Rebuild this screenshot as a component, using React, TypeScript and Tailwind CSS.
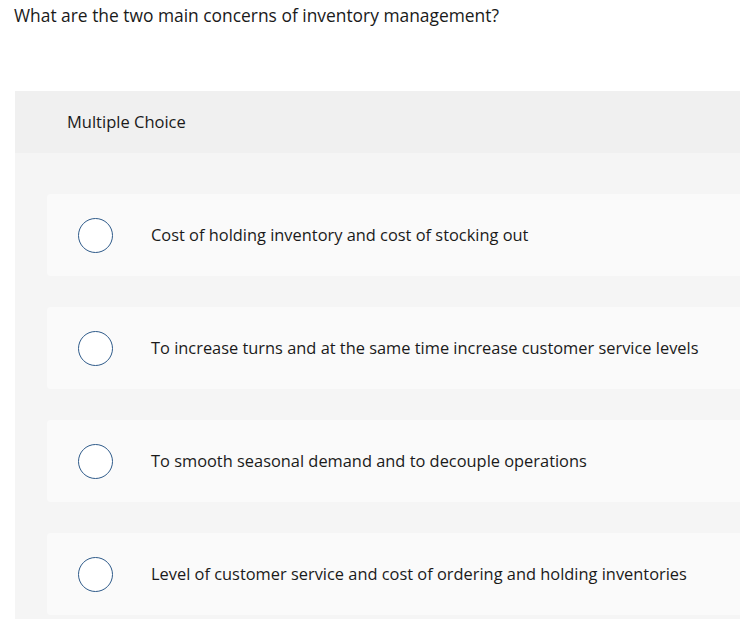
const options = [
  "Cost of holding inventory and cost of stocking out",
  "To increase turns and at the same time increase customer service levels",
  "To smooth seasonal demand and to decouple operations",
  "Level of customer service and cost of ordering and holding inventories",
];

export default function App() {
  return (
    <div
      className="w-[740px] h-[619px] overflow-hidden bg-white text-[#1a1a1a]"
      style={{ fontFamily: "'Open Sans', Lato, sans-serif" }}
    >
      <h1 className="pl-[14px] pt-[3px] text-[17.4px] leading-[24px] font-normal">
        What are the two main concerns of inventory management?
      </h1>

      <div className="ml-[15px] mt-[64px]">
        {/* header */}
        <div className="h-[62px] bg-[#f0f0f0] flex items-center pl-[52px] text-[16.5px]">
          Multiple Choice
        </div>

        {/* answers */}
        <div className="bg-[#f5f5f5] pl-[32px] pt-[41px] pb-[10px] flex flex-col gap-[31px]">
          {options.map((text) => (
            <div
              key={text}
              className="h-[82px] bg-[#fafafa] rounded-l-[4px] flex items-center pl-[31px]"
            >
              <span className="w-[35px] h-[35px] rounded-full border-[1.5px] border-[#2f5b8a] bg-white shrink-0" />
              <span className="ml-[38px] text-[16.4px]">{text}</span>
            </div>
          ))}
        </div>
      </div>
    </div>
  );
}
